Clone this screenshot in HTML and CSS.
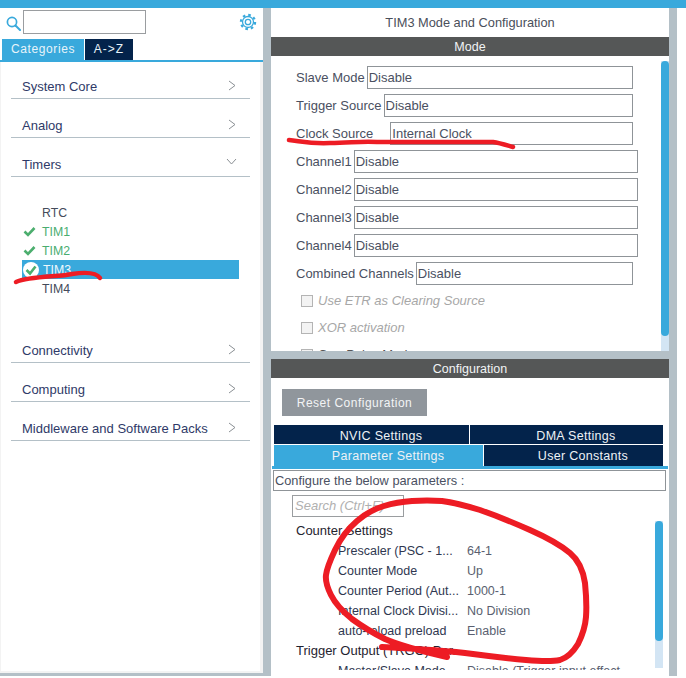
FILE: index.html
```html
<!DOCTYPE html>
<html lang="en">
<head>
<meta charset="utf-8">
<title>TIM3 Mode and Configuration</title>
<link rel="stylesheet" href="styles.css">
</head>
<body>
<div class="topbar"></div>
<div class="app">
  <aside class="left">
    <div class="search-row">
      <svg class="search-icon" width="15" height="15" viewBox="0 0 15 15"><circle cx="6" cy="6" r="4.6" fill="none" stroke="#39a9dc" stroke-width="1.7"/><path d="M9.5 9.5L14 14" stroke="#39a9dc" stroke-width="2" stroke-linecap="round"/></svg>
      <div class="search-input"></div>
      <svg class="gear" width="18" height="18" viewBox="0 0 18 18"><circle cx="9" cy="9" r="7.1" fill="none" stroke="#39a9dc" stroke-width="2.2" stroke-dasharray="2.6 2.98"/><circle cx="9" cy="9" r="5.5" fill="none" stroke="#39a9dc" stroke-width="1.3"/><circle cx="9" cy="9" r="2.7" fill="none" stroke="#39a9dc" stroke-width="1.3"/></svg>
    </div>
    <div class="cat-tabs">
      <div class="cat-tab cat-active">Categories</div>
      <div class="cat-tab cat-dark">A-&gt;Z</div>
    </div>
    <nav class="nav">
      <div class="nav-row"><span>System Core</span><svg class="chev" width="8" height="11" viewBox="0 0 8 11"><path d="M1 1l6 4.5L1 10" fill="none" stroke="#8a8f94"/></svg></div>
      <div class="nav-row"><span>Analog</span><svg class="chev" width="8" height="11" viewBox="0 0 8 11"><path d="M1 1l6 4.5L1 10" fill="none" stroke="#8a8f94"/></svg></div>
      <div class="nav-row"><span>Timers</span><svg class="chev-down" width="11" height="8" viewBox="0 0 11 8"><path d="M1 1l4.5 5L10 1" fill="none" stroke="#8a8f94"/></svg></div>
      <ul class="timers">
        <li class="timer"><span class="tick"></span>RTC</li>
        <li class="timer timer-on"><span class="tick"><svg width="13" height="11" viewBox="0 0 13 11"><path d="M1.5 5.5L5 9l6.5-7" fill="none" stroke="#4cae6e" stroke-width="2.6"/></svg></span>TIM1</li>
        <li class="timer timer-on"><span class="tick"><svg width="13" height="11" viewBox="0 0 13 11"><path d="M1.5 5.5L5 9l6.5-7" fill="none" stroke="#4cae6e" stroke-width="2.6"/></svg></span>TIM2</li>
        <li class="timer timer-sel"><span class="tick tick-sel"><svg width="16" height="16" viewBox="0 0 16 16"><circle cx="8" cy="8" r="8" fill="#fff"/><path d="M3.5 8L7 11.5l5.5-7" fill="none" stroke="#4cae6e" stroke-width="2.6"/></svg></span>TIM3</li>
        <li class="timer"><span class="tick"></span>TIM4</li>
      </ul>
      <div class="nav-row nav-after"><span>Connectivity</span><svg class="chev" width="8" height="11" viewBox="0 0 8 11"><path d="M1 1l6 4.5L1 10" fill="none" stroke="#8a8f94"/></svg></div>
      <div class="nav-row"><span>Computing</span><svg class="chev" width="8" height="11" viewBox="0 0 8 11"><path d="M1 1l6 4.5L1 10" fill="none" stroke="#8a8f94"/></svg></div>
      <div class="nav-row"><span>Middleware and Software Packs</span><svg class="chev" width="8" height="11" viewBox="0 0 8 11"><path d="M1 1l6 4.5L1 10" fill="none" stroke="#8a8f94"/></svg></div>
    </nav>
  </aside>

  <main class="right">
    <section class="mode">
      <h1 class="title">TIM3 Mode and Configuration</h1>
      <h2 class="band">Mode</h2>
      <div class="mode-body">
        <div class="form">
          <div class="field"><label class="lab">Slave Mode</label><div class="sel">Disable</div></div>
          <div class="field"><label class="lab">Trigger Source</label><div class="sel">Disable</div></div>
          <div class="field"><label class="lab lab-clock">Clock Source</label><div class="sel">Internal Clock</div></div>
          <div class="field field-wide"><label class="lab">Channel1</label><div class="sel">Disable</div></div>
          <div class="field field-wide"><label class="lab">Channel2</label><div class="sel">Disable</div></div>
          <div class="field field-wide"><label class="lab">Channel3</label><div class="sel">Disable</div></div>
          <div class="field field-wide"><label class="lab">Channel4</label><div class="sel">Disable</div></div>
          <div class="field"><label class="lab">Combined Channels</label><div class="sel">Disable</div></div>
          <div class="check"><span class="box"></span><em>Use ETR as Clearing Source</em></div>
          <div class="check"><span class="box"></span><em>XOR activation</em></div>
          <div class="check check-on"><span class="box"></span><span>One Pulse Mode</span></div>
        </div>
        <div class="scroll scroll-mode"><div class="thumb thumb-mode"></div></div>
      </div>
    </section>

    <section class="config">
      <h2 class="band">Configuration</h2>
      <button class="reset" type="button">Reset Configuration</button>
      <div class="tabs">
        <div class="tab tab-nvic">NVIC Settings</div>
        <div class="tab tab-dma">DMA Settings</div>
        <div class="tab tab-param">Parameter Settings</div>
        <div class="tab tab-user">User Constants</div>
      </div>
      <div class="tabline"></div>
      <div class="hint">Configure the below parameters :</div>
      <div class="param-area">
        <div class="params">
          <div class="param-search">Search (Ctrl+F)</div>
          <div class="group">Counter Settings</div>
          <div class="param"><span class="pn">Prescaler (PSC - 1...</span><span class="pv">64-1</span></div>
          <div class="param"><span class="pn">Counter Mode</span><span class="pv">Up</span></div>
          <div class="param"><span class="pn">Counter Period (Aut...</span><span class="pv">1000-1</span></div>
          <div class="param"><span class="pn">Internal Clock Divisi...</span><span class="pv">No Division</span></div>
          <div class="param"><span class="pn">auto-reload preload</span><span class="pv">Enable</span></div>
          <div class="group">Trigger Output (TRGO) Par...</div>
          <div class="param"><span class="pn">Master/Slave Mode...</span><span class="pv">Disable (Trigger input effect ...</span></div>
        </div>
        <div class="scroll scroll-param"><div class="thumb thumb-param"></div></div>
      </div>
    </section>
  </main>
</div>

<svg class="ink" width="686" height="678" viewBox="0 0 686 678">
  <path class="ink-thin" d="M16 282C30 276 60 277 72 274C85 272 96 272 100 278"/>
  <path class="ink-thin" d="M289 140C300 141 310 144 330 143C350 143 360 141 377 142C410 142 450 142 493 142C500 143 506 145 513 147"/>
  <path class="ink-wide" d="M382 647Q443 650 473 654Q503 658 526 660Q550 662 560 660Q570 657 578 644Q585 630 586 617Q587 603 585 583Q582 563 570 553Q557 542 530 530Q503 518 480 510Q457 503 442 501Q427 500 412 501Q397 502 384 506Q370 510 357 521Q343 533 335 550Q327 567 326 575Q325 583 331 595Q337 607 352 619Q367 630 385 639Q403 647 447 657"/>
</svg>
</body>
</html>
```
FILE: styles.css
```css
* { box-sizing: border-box; }
html, body { margin: 0; padding: 0; }
body {
  width: 686px;
  height: 678px;
  overflow: hidden;
  position: relative;
  background: #fff;
  font-family: "Liberation Sans", Arial, sans-serif;
  font-size: 12.5px;
  color: #3c4358;
}
.topbar { height: 8px; background: #39a9dc; }
.app {
  display: flex;
  width: 677px;
  height: 668px;
  background: #b4c0c7;
}

/* left column */
.left {
  width: 263px;
  height: 665px;
  background: #f3f3f3;
  display: flex;
  flex-direction: column;
}
.search-row {
  height: 31px;
  background: #fff;
  display: flex;
  align-items: flex-start;
  padding: 2px 6px 0 6px;
}
.search-icon { margin-top: 6px; }
.search-input {
  width: 123px;
  height: 24px;
  margin-left: 2px;
  border: 1px solid #9a9da0;
  background: #fff;
}
.gear { margin: 3px 0 0 auto; }
.cat-tabs {
  display: flex;
  gap: 1px;
  height: 23px;
  padding-left: 2px;
  background: #fff;
  border-bottom: 2px solid #39a9dc;
}
.cat-tab {
  color: #e8f4fa;
  font-size: 12px;
  letter-spacing: 0.6px;
  line-height: 21px;
  text-align: center;
}
.cat-active { width: 82px; background: #39a9dc; }
.cat-dark { width: 48px; background: #03234b; letter-spacing: 1px; }

.nav {
  flex: 1;
  margin: 0 3px 2px 1px;
  padding: 9px 10px 0 10px;
  background: #fff;
}
.nav-row {
  height: 28px;
  margin-top: 11px;
  padding: 3px 14px 0 11px;
  display: flex;
  align-items: center;
  justify-content: space-between;
  border-bottom: 1px solid #b4c0c7;
  color: #2f3a68;
  font-size: 13px;
}
.nav-row:first-child { margin-top: 0; }
.nav-after { margin-top: 37px; }
.chev { margin-top: -2px; }
.chev-down { margin-top: -4px; margin-right: -1px; }
.timers {
  list-style: none;
  margin: 26px 11px 0 11px;
  padding: 0;
}
.timer {
  height: 19px;
  display: flex;
  align-items: center;
  font-size: 12.3px;
  color: #444b5a;
}
.tick { width: 20px; display: flex; align-items: center; padding-left: 1px; }
.tick-sel { width: 21px; }
.timer-on { color: #49ad70; }
.timer-sel { background: #39a9dc; color: #eef8fc; }

/* right column */
.right {
  width: 398px;
  margin: 0 8px 0 8px;
  display: flex;
  flex-direction: column;
  gap: 8px;
}
.mode { background: #fff; }
.title {
  margin: 0;
  height: 29px;
  font-size: 12.8px;
  font-weight: normal;
  line-height: 29px;
  text-align: center;
  color: #4a4f5a;
}
.band {
  margin: 0;
  height: 19px;
  padding-top: 1px;
  background: #555757;
  color: #f2f4f5;
  font-size: 12.5px;
  font-weight: normal;
  line-height: 18px;
  text-align: center;
}
.mode-body {
  height: 295px;
  display: flex;
  overflow: hidden;
}
.form {
  flex: 1;
  padding: 10px 0 0 25px;
}
.field {
  display: flex;
  align-items: center;
  gap: 2px;
  width: 337px;
  height: 23px;
  margin-bottom: 5px;
}
.field-wide { width: 342px; }
.lab { white-space: nowrap; font-size: 13px; color: #4a5061; }
.lab-clock { margin-right: 15px; }
.sel {
  flex: 1;
  height: 23px;
  padding-left: 1px;
  border: 1px solid #8f9498;
  line-height: 21px;
  font-size: 13px;
  color: #4a5061;
}
.check {
  display: flex;
  align-items: center;
  height: 27px;
  padding-left: 5px;
  gap: 5px;
  color: #a7a7a7;
  font-size: 13px;
}
.form > .field + .check { margin-top: -3px; }
.box {
  width: 12px;
  height: 12px;
  border: 1px solid #b4b4b4;
  background: #f3f3f3;
}
.check-on { color: #555; }
.scroll {
  flex: none;
  width: 8px;
  background: #d3e5f4;
}
.scroll-mode { margin-top: 5px; }
.thumb { background: #39a9dc; border-radius: 4px; }
.thumb-mode { height: 275px; }
.config {
  flex: 1;
  background: #fff;
  overflow: hidden;
  min-height: 0;
}
.reset {
  display: block;
  width: 145px;
  height: 27px;
  margin: 11px 0 0 11px;
  border: 0;
  padding: 0;
  background: #90969c;
  color: #f3f4f5;
  font: 12px "Liberation Sans", Arial, sans-serif;
  letter-spacing: 0.5px;
}
.tabs {
  display: grid;
  grid-template-columns: 195px 1px 13px 1px 179px;
  grid-template-rows: 19px 21px;
  row-gap: 1px;
  margin: 9px 0 0 3px;
  width: 389px;
}
.tab {
  color: #eef2f6;
  font-size: 12.5px;
  letter-spacing: 0.3px;
  text-align: center;
  background: #03234b;
  padding: 1px 0 0 19px;
  line-height: 20px;
}
.tab-nvic { grid-column: 1 / 2; }
.tab-dma { grid-column: 3 / 6; }
.tab-param { grid-column: 1 / 4; background: #39a9dc; }
.tab-user { grid-column: 5 / 6; }
.tabline { height: 3px; margin: 0 1px 0 1px; background: #39a9dc; }
.hint {
  height: 21px;
  margin: 1px 3px 0 2px;
  padding-left: 1px;
  border: 1px solid #8f9498;
  line-height: 19px;
  font-size: 12.8px;
  color: #4a5061;
}
.param-area {
  display: flex;
  height: 179px;
  padding-right: 6px;
  overflow: hidden;
}
.params {
  flex: 1;
  overflow: hidden;
  padding-left: 25px;
}
.param-search {
  width: 112px;
  height: 22px;
  margin: 4px 0 4px -4px;
  padding-left: 2px;
  border: 1px solid #9a9da0;
  color: #b0b0b0;
  font-style: italic;
  font-size: 13px;
  line-height: 20px;
  white-space: nowrap;
  overflow: hidden;
}
.group { height: 20px; line-height: 20px; color: #1f2430; font-size: 13px; white-space: nowrap; }
.param { display: flex; height: 20px; line-height: 20px; padding-left: 42px; font-size: 12.5px; white-space: nowrap; }
.pn { width: 129px; color: #2f3750; overflow: hidden; }
.pv { color: #5a5f70; }
.scroll-param { margin-top: 30px; height: 147px; }
.thumb-param { height: 120px; }

/* red pen annotations drawn over the screenshot */
.ink { position: absolute; left: 0; top: 0; pointer-events: none; }
.ink-thin, .ink-wide { fill: none; stroke: #ed1c24; stroke-linecap: round; stroke-linejoin: round; }
.ink-thin { stroke-width: 4.5; }
.ink-wide { stroke-width: 6; }
```
